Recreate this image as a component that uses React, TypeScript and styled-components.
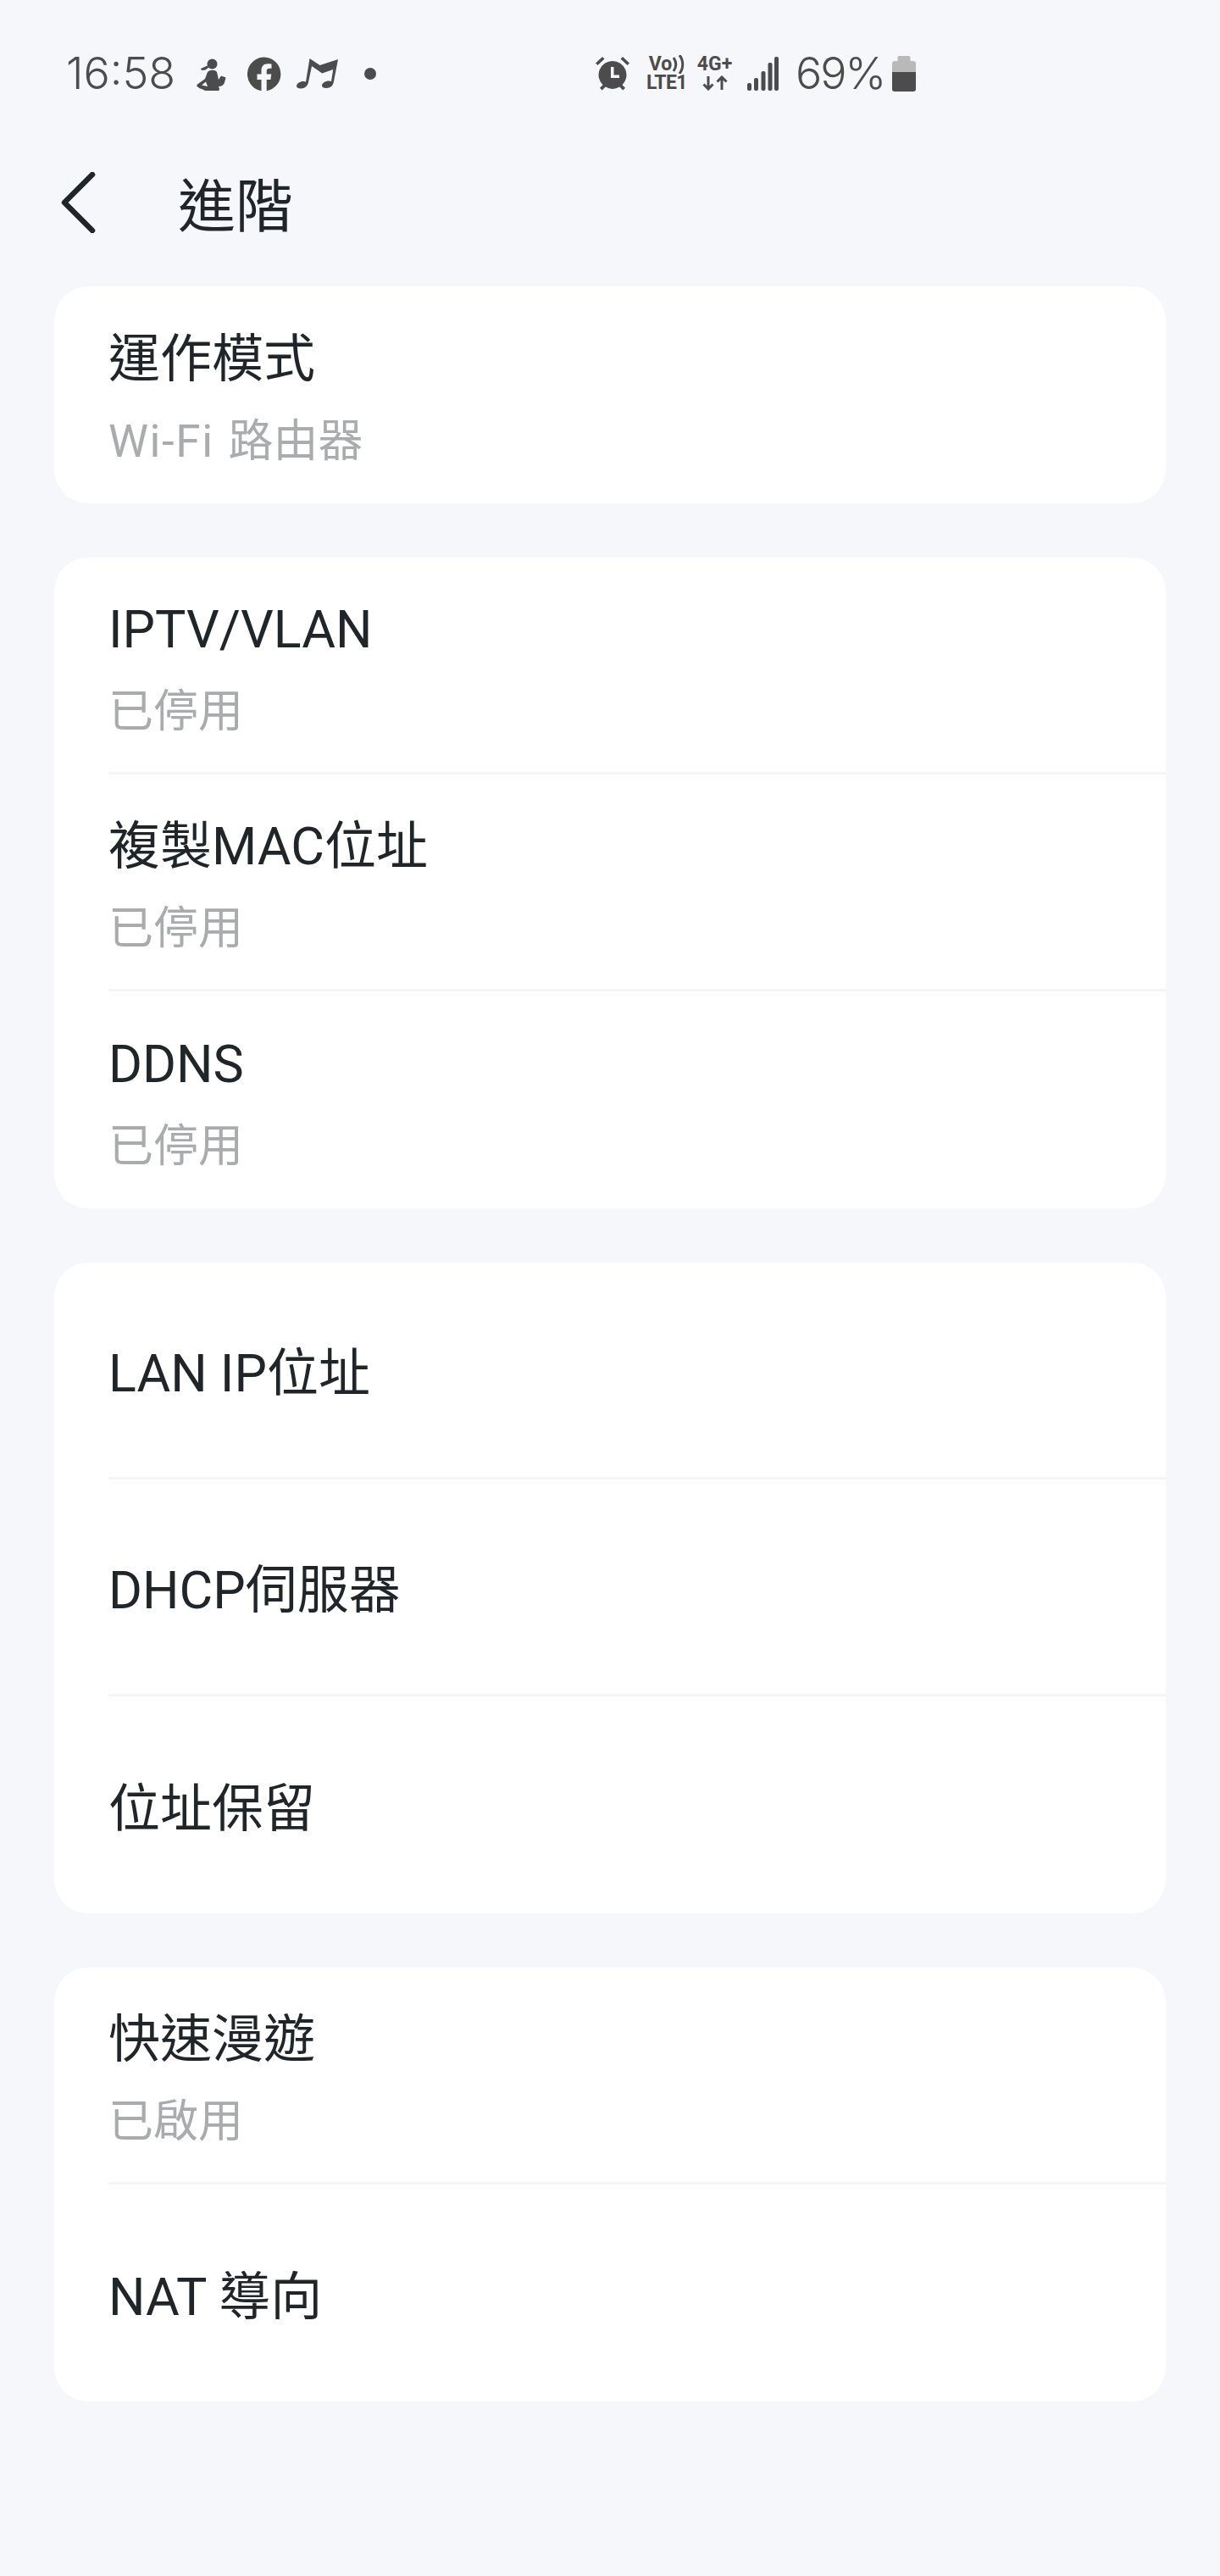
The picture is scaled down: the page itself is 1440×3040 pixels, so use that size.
import React from "react";
import styled, { createGlobalStyle } from "styled-components";

const Global = createGlobalStyle`
  html, body { margin: 0; padding: 0; background: #f6f7fb; }
  body { font-family: "Roboto", "Noto Sans CJK TC", sans-serif; }
`;

const Page = styled.div`
  width: 1440px;
  height: 3040px;
  background: #f6f7fb;
  display: flex;
  flex-direction: column;
  overflow: hidden;
`;

const StatusBar = styled.div`
  height: 174px;
  box-sizing: border-box;
  padding: 62px 0 0 78px;
  display: flex;
  align-items: flex-start;
  color: #4c4c4c;
`;

const Time = styled.span`
  font: 300 52px/50px "Inter", "Roboto", sans-serif;
  width: 154px;
`;

const Glyphs = styled.div`
  display: flex;
  align-items: center;
  height: 50px;
  width: 471px;
`;

const Right = styled.div`
  display: flex;
  align-items: center;
  height: 50px;
`;

const Percent = styled.span`
  font: 300 52px/50px "Inter", "Roboto", sans-serif;
  letter-spacing: -2px;
  margin: 0 9px 0 20px;
`;

const NetStack = styled.div<{ $w: number; $mr: number }>`
  width: ${(p) => p.$w}px;
  margin-right: ${(p) => p.$mr}px;
  flex: none;
  display: flex;
  flex-direction: column;
  align-items: center;
  font: 700 23px/20px "Roboto", sans-serif;
  color: #4c4c4c;
`;

const NetLine = styled.div`
  display: flex;
  align-items: center;
  height: 22px;
  white-space: nowrap;
`;

const Tight = styled.span`
  letter-spacing: -0.6px;
`;

const TitleRow = styled.div`
  display: flex;
  align-items: center;
  height: 140px;
  margin-top: -5px;
  margin-bottom: 29px;
  padding-left: 72px;
`;

const Title = styled.h1`
  margin: 0 0 0 96px;
  font: 400 68px/80px "Noto Sans CJK TC", sans-serif;
  color: #1f2529;
`;

const List = styled.div`
  display: flex;
  flex-direction: column;
  gap: 64px;
  padding: 0 64px;
`;

const Card = styled.section`
  background: #fff;
  border-radius: 40px;
  overflow: hidden;
`;

const Row = styled.div<{ $withSub: boolean }>`
  height: 256px;
  box-sizing: border-box;
  margin-left: 64px;
  padding-top: ${(p) => (p.$withSub ? 7 : 9)}px;
  display: flex;
  flex-direction: column;
  justify-content: center;
  &:not(:last-child) { border-bottom: 3px solid #f4f5f7; }
`;

const Name = styled.div`
  font: 400 61px/84px "Roboto", "Noto Sans CJK TC", sans-serif;
  color: #1f2529;
`;

const Sub = styled.div`
  font: 400 53px/72px "Roboto", "Noto Sans CJK TC", sans-serif;
  color: #a9abac;
  margin-top: 19px;
`;

const WideLatin = styled.span`
  letter-spacing: 1.6px;
  word-spacing: 2px;
`;

const Ico = styled.svg<{ $mr?: number }>`
  display: block;
  flex: none;
  margin-right: ${(p) => p.$mr ?? 0}px;
  fill: #4c4c4c;
`;

type Item = { name: string; sub?: React.ReactNode };

const cards: Item[][] = [
  [{ name: "運作模式", sub: <><WideLatin>Wi-Fi </WideLatin>路由器</> }],
  [
    { name: "IPTV/VLAN", sub: "已停用" },
    { name: "複製MAC位址", sub: "已停用" },
    { name: "DDNS", sub: "已停用" },
  ],
  [{ name: "LAN IP位址" }, { name: "DHCP伺服器" }, { name: "位址保留" }],
  [{ name: "快速漫遊", sub: "已啟用" }, { name: "NAT 導向" }],
];

export default function App() {
  return (
    <Page>
      <Global />
      <StatusBar>
        <Time>16:58</Time>
        <Glyphs>
          <Ico $mr={25} width="35" height="39" viewBox="0 0 35 39">
            <circle cx="18.500" cy="7.500" r="6" />
            <path d="M14 9L5 13l1 2 4.500-.5 4-3z" />
            <path fillRule="evenodd" d="M13 17c3-3 9-3 11 0l2 9 3-4.500 5.500 2-1.500 6c-1 3-4 4.500-7 4.500l1 3c0 1.500-1 2.500-2 2.500H13c-4 0-6-3-9-3l-4-3 1-2 9-6.500zM11 28.500L6 32.500l7 1.500z" />
          </Ico>
          <Ico $mr={18} width="40" height="41" viewBox="0 0 40 41">
            <path d="M20 .5a20 20 0 0 0-3.500 39.700V27h-5v-6.500h5v-4.500c0-5 3-7.700 7.500-7.700 2.200 0 4.500.4 4.500.4v5h-2.500c-2.500 0-3.300 1.500-3.300 3.100v3.700h5.600l-.9 6.500h-4.700v13.200A20 20 0 0 0 20 .5z" />
          </Ico>
          <Ico $mr={31} width="49" height="36" viewBox="0 0 49 36">
            <path d="M15.500 0l12 8L49 1l-5 26c-.6 5-4 8-9 8-3 0-5-1-5-3 0-3 4-5.500 8-5.500 1.500 0 2.500.3 3 .6l2.200-14-13 4.400L18 9l-4 19c-.6 4-4 7.500-9 7.500-3 0-5-1-5-3 0-3 4-5.500 8-5.500 1.500 0 2.500.3 3 .6z" />
          </Ico>
          <Ico width="14" height="14" viewBox="0 0 14 14">
            <circle cx="7" cy="7" r="7" />
          </Ico>
        </Glyphs>
        <Right>
          <Ico $mr={19} width="40" height="40" viewBox="0 0 40 40">
            <path d="M0 7.500L8 0l2.500 2.500-8 7.500zM40 7.500L32 0l-2.500 2.500 8 7.500z" />
            <path fillRule="evenodd" d="M20 5a16.500 16.500 0 0 1 11.500 28.300l3.500 3.500-2.700 2.700-4-4a16.500 16.500 0 0 1-16.600 0l-4 4L5 36.800l3.500-3.500A16.500 16.500 0 0 1 20 5zM18 12v13h10v-3.500h-6.500V12z" />
          </Ico>
          <NetStack $w={50} $mr={11}>
            <NetLine>
              Vo
              <Ico width="15" height="22" viewBox="0 0 15 22">
                <path d="M2 3c3.500 5 3.500 11 0 16M9 0c5 6.500 5 15.500 0 22" fill="none" stroke="#4c4c4c" strokeWidth="3" />
              </Ico>
            </NetLine>
            <NetLine><Tight>LTE1</Tight></NetLine>
          </NetStack>
          <NetStack $w={41} $mr={18}>
            <NetLine>4G+</NetLine>
            <NetLine>
              <Ico width="30" height="18" viewBox="0 0 30 18">
                <path d="M7 1v15M1.500 10.500L7 16l5.500-5.500M23 17V2M17.500 7.500L23 2l5.500 5.500" fill="none" stroke="#4c4c4c" strokeWidth="3" />
              </Ico>
            </NetLine>
          </NetStack>
          <Ico width="37" height="40" viewBox="0 0 37 40">
            <rect x="0" y="31" width="5" height="9" rx="2" />
            <rect x="8" y="25" width="5" height="15" rx="2" />
            <rect x="16.500" y="17" width="5" height="23" rx="2" />
            <rect x="24.500" y="7" width="5" height="33" rx="2" />
            <rect x="32" y="0" width="5" height="40" rx="2" />
          </Ico>
          <Percent>69%</Percent>
          <Ico width="28" height="42" viewBox="0 0 28 42">
            <path fill="#b9b9b9" d="M8 0h12q1.500 0 1.500 1.500V6H25q3 0 3 3v11H0V9q0-3 3-3h3.500V1.500Q6.500 0 8 0z" />
            <path d="M0 19h28v20q0 3-3 3H3q-3 0-3-3z" />
          </Ico>
        </Right>
      </StatusBar>
      <TitleRow>
        <svg width="42" height="72" viewBox="0 0 42 72" fill="none">
          <path d="M37 3L4 36l33 33" stroke="#1f2529" strokeWidth="6.500" strokeLinecap="round" strokeLinejoin="round" />
        </svg>
        <Title>進階</Title>
      </TitleRow>
      <List>
        {cards.map((rows, i) => (
          <Card key={i}>
            {rows.map((r) => (
              <Row key={r.name} $withSub={!!r.sub}>
                <Name>{r.name}</Name>
                {r.sub && <Sub>{r.sub}</Sub>}
              </Row>
            ))}
          </Card>
        ))}
      </List>
    </Page>
  );
}
